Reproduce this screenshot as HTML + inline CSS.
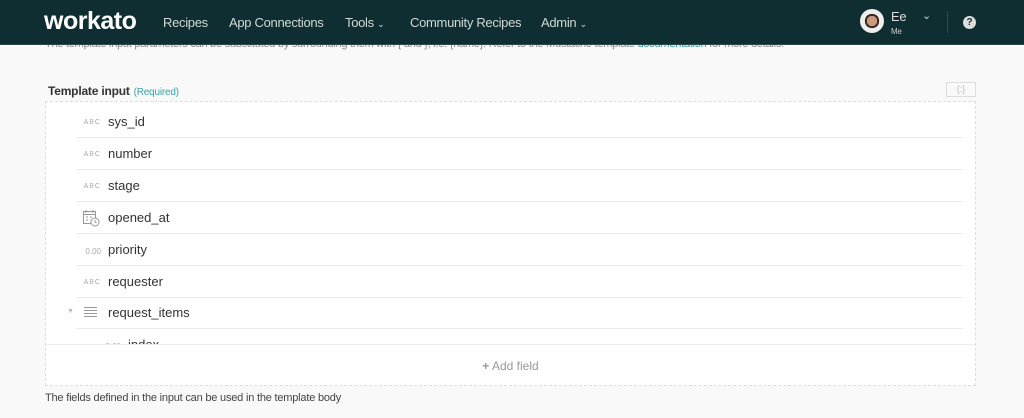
<!DOCTYPE html>
<html><head><style>
*{margin:0;padding:0;box-sizing:border-box}
body{width:1024px;height:418px;overflow:hidden;background:#f9f9f9;font-family:"Liberation Sans",sans-serif;position:relative;color:#333}
.hdr{position:absolute;top:0;left:0;width:1024px;height:45px;background:#0f2e31;z-index:2;border-bottom:1px solid #2a4a4c}
.hdr span{position:absolute;color:#cfd8d8;font-size:13px;top:15px;letter-spacing:-0.3px}
.logo{position:absolute;left:44px;top:7px;color:#fff;font-size:25px;font-weight:bold;letter-spacing:-0.5px}
.intro{position:absolute;top:38px;left:45px;font-size:11px;color:#888;white-space:nowrap;letter-spacing:-0.25px}
.intro a{color:#2a9ca5}
.lbl{position:absolute;top:84px;left:48px;font-size:12px;font-weight:bold;color:#333;letter-spacing:-0.2px}
.lbl i{font-style:normal;font-weight:normal;color:#36a3ac;font-size:10px;margin-left:4px}
.btn{position:absolute;left:946px;top:82px;width:30px;height:15px;border:1px solid #ddd;font-size:9px;color:#bbb;text-align:center;line-height:13px}
.box{position:absolute;left:45px;top:101px;width:931px;height:285px;border:1px dashed #ddd;background:#fff;overflow:hidden}
.row{position:absolute;left:30px;width:887px;height:32px;border-bottom:1px solid #ececec;font-size:13px;color:#333}
.row b{position:absolute;left:0;width:25px;text-align:right;font-weight:normal;font-size:7px;color:#aaa;letter-spacing:1px;top:13px}
.row span{position:absolute;left:32px;top:8px}
.add{position:absolute;left:0;top:242px;width:929px;height:43px;border-top:1px solid #eee;background:#fff;text-align:center;line-height:42px;font-size:12px;color:#999}
.foot{position:absolute;top:392px;left:45px;font-size:11px;color:#444;letter-spacing:-0.2px}
</style></head><body>
<div class="hdr">
<div class="logo">workato</div>
<span style="left:163px">Recipes</span>
<span style="left:229px">App Connections</span>
<span style="left:345px">Tools <small style="font-size:9px">⌄</small></span>
<span style="left:410px">Community Recipes</span>
<span style="left:541px">Admin <small style="font-size:9px">⌄</small></span>
<div style="position:absolute;left:860px;top:9px;width:24px;height:24px;border-radius:50%;background:radial-gradient(circle at 50% 50%,#c99a80 0 30%,#3a2a20 31% 42%,#eee 43%)"></div>
<span style="left:891px;top:9px;font-size:13px;color:#ddd">Ee</span>
<span style="left:891px;top:27px;font-size:8px;color:#ccc">Me</span>
<span style="left:922px;top:9px;font-size:11px">⌄</span>
<div style="position:absolute;left:947px;top:11px;width:1px;height:22px;background:#2d4a4c"></div>
<div style="position:absolute;left:963px;top:16px;width:13px;height:13px;border-radius:50%;background:#ddd;color:#0f2e31;font-size:10px;font-weight:bold;text-align:center;line-height:13px">?</div>
</div>
<div class="intro">The template input parameters can be substituted by surrounding them with { and }, i.e. {name}. Refer to the Mustache template <a>documentation</a> for more details.</div>
<div class="lbl">Template input<i>(Required)</i></div>
<div class="btn">{:}</div>
<div class="box">
<div class="row" style="top:4px"><b>ABC</b><span>sys_id</span></div>
<div class="row" style="top:36px"><b>ABC</b><span>number</span></div>
<div class="row" style="top:68px"><b>ABC</b><span>stage</span></div>
<div class="row" style="top:100px"><svg style="position:absolute;left:6px;top:7px" width="18" height="18" viewBox="0 0 18 18" fill="none" stroke="#999" stroke-width="1"><rect x="1.5" y="2.5" width="12" height="12"/><path d="M1.5 5.5h12M4 1v3M11 1v3M4 8h2M8 8h2M4 11h2"/><circle cx="13" cy="13" r="4" fill="#fff"/><path d="M13 11v2l1.5 1"/></svg><span>opened_at</span></div>
<div class="row" style="top:132px"><b style="letter-spacing:0;font-size:8px">0.00</b><span>priority</span></div>
<div class="row" style="top:164px"><b>ABC</b><span>requester</span></div>
<div class="row" style="top:195px"><svg style="position:absolute;left:8px;top:10px" width="13" height="11" viewBox="0 0 13 11" stroke="#999" stroke-width="1"><path d="M0 .5h13M0 3.5h13M0 6.5h13M0 9.5h13"/></svg><span>request_items</span><i style="position:absolute;left:-9px;top:11px;font-size:7px;color:#bbb;font-style:normal">▼</i></div>
<div class="row" style="top:227px;left:50px;border:none"><b style="letter-spacing:0;font-size:8px">0.00</b><span>index</span></div>
<div class="add"><b style="color:#999">+</b> Add field</div>
</div>
<div class="foot">The fields defined in the input can be used in the template body</div>
</body></html>
